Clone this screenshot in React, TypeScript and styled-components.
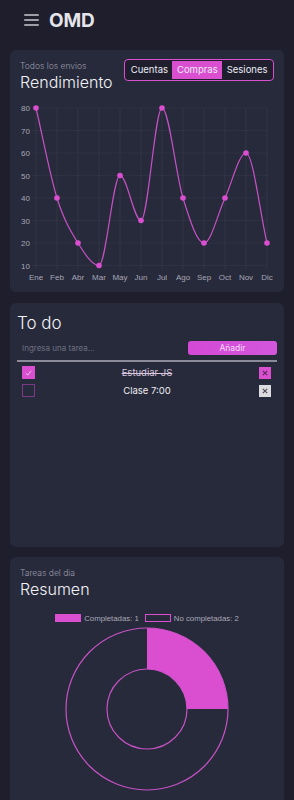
import React from 'react';
import styled, { createGlobalStyle } from 'styled-components';

const PINK = '#d94fd0';
const LINE = '#c651c4';
const PAGE_BG = '#1e1e2d';
const CARD_BG = '#272a3b';
const UI_FONT = `"Inter", "Noto Sans", sans-serif`;
const CHART_FONT = `"Liberation Sans", Arial, sans-serif`;

const GlobalStyle = createGlobalStyle`
  html, body {
    margin: 0;
    padding: 0;
    background: ${PAGE_BG};
    font-family: ${UI_FONT};
    color: #ececf2;
  }
  * { box-sizing: border-box; }
`;

const Page = styled.div`
  padding: 0 10px 20px;
`;

const Header = styled.header`
  display: flex;
  align-items: center;
  gap: 10px;
  height: 40px;
  padding-left: 14px;
  margin-bottom: 10px;
`;

const Brand = styled.div`
  font-size: 19px;
  font-weight: 700;
  color: #e4e4ea;
  letter-spacing: -0.2px;
`;

const Card = styled.section<{ $gap?: number }>`
  background: ${CARD_BG};
  border-radius: 6px;
  padding: 10px;
  margin-top: ${(p) => p.$gap ?? 0}px;
`;

const TodoCard = styled(Card)`
  padding: 8px 7px;
  height: 244px;
`;

const CardHead = styled.div`
  display: flex;
  justify-content: space-between;
  align-items: flex-start;
`;

const Eyebrow = styled.div`
  font-size: 8.5px;
  line-height: 12px;
  font-weight: 300;
  color: #9c9cab;
`;

const Title = styled.h2`
  margin: 0;
  font-size: 16px;
  line-height: 20px;
  font-weight: 300;
  color: #f2f2f6;
`;

const Segmented = styled.div`
  display: flex;
  margin-top: -1px;
  padding: 1px;
  border: 1.5px solid ${PINK};
  border-radius: 4px;
  background: ${PAGE_BG};
`;

const SegButton = styled.button<{ $active?: boolean }>`
  height: 18px;
  padding: 0 4.5px;
  border: none;
  background: ${(p) => (p.$active ? PINK : PAGE_BG)};
  color: #ececf4;
  font-family: ${UI_FONT};
  font-size: 9.5px;
  line-height: 18px;
  cursor: pointer;
`;

const ChartSvg = styled.svg`
  display: block;
  margin-top: 6px;
  overflow: visible;
`;

const TodoTitle = styled.h2`
  margin: 0;
  font-size: 17px;
  line-height: 24px;
  font-weight: 300;
  color: #f2f2f6;
`;

const InputRow = styled.div`
  display: flex;
  align-items: center;
  justify-content: space-between;
  margin-top: 6px;
  height: 14px;
`;

const TaskInput = styled.input`
  width: 150px;
  padding: 0 0 0 5px;
  border: none;
  outline: none;
  background: transparent;
  font-family: ${UI_FONT};
  font-size: 8px;
  color: #e0e0e8;
  &::placeholder { color: #6e7082; }
`;

const AddButton = styled.button`
  width: 89px;
  height: 14px;
  border: none;
  border-radius: 3px;
  background: linear-gradient(90deg, #d449d6, #d257dc);
  color: #f3dcf6;
  font-family: ${UI_FONT};
  font-size: 8.5px;
  line-height: 14px;
  padding: 0;
`;

const Divider = styled.div`
  height: 2px;
  margin-top: 5px;
  background: #8b8b99;
`;

const TaskList = styled.ul`
  list-style: none;
  margin: 4px 0 0;
  padding: 0 6px 0 5px;
  display: flex;
  flex-direction: column;
  gap: 5px;
`;

const TaskRow = styled.li`
  display: grid;
  grid-template-columns: 13px 1fr 12px;
  align-items: center;
  height: 13px;
`;

const CheckBox = styled.span<{ $done?: boolean }>`
  width: 13px;
  height: 13px;
  display: flex;
  align-items: center;
  justify-content: center;
  background: ${(p) => (p.$done ? PINK : 'transparent')};
  border: ${(p) => (p.$done ? 'none' : '1.5px solid #7a3a86')};
`;

const TaskText = styled.span<{ $done?: boolean }>`
  text-align: center;
  font-size: 9.5px;
  line-height: 13px;
  color: ${(p) => (p.$done ? '#d9c6de' : '#ececf0')};
  text-decoration: ${(p) => (p.$done ? 'line-through' : 'none')};
`;

const DeleteBtn = styled.span<{ $done?: boolean }>`
  width: 12px;
  height: 12px;
  display: flex;
  align-items: center;
  justify-content: center;
  background: ${(p) => (p.$done ? PINK : '#dcdce0')};
`;

const Legend = styled.div`
  display: flex;
  justify-content: center;
  align-items: center;
  gap: 6px;
  margin-top: 15px;
  height: 8px;
`;

const LegendItem = styled.div`
  display: flex;
  align-items: center;
  gap: 3px;
  font-family: ${CHART_FONT};
  font-size: 7.8px;
  color: #a9a9b6;
`;

const LegendBox = styled.span<{ $filled?: boolean }>`
  width: 26px;
  height: 8px;
  background: ${(p) => (p.$filled ? PINK : 'transparent')};
  border: 1.5px solid ${PINK};
`;

const DonutWrap = styled.div`
  display: flex;
  justify-content: center;
  margin-top: 5px;
  padding-bottom: 12px;
`;

const labels = ['Ene', 'Feb', 'Abr', 'Mar', 'May', 'Jun', 'Jul', 'Ago', 'Sep', 'Oct', 'Nov', 'Dic'];
const values = [80, 40, 20, 10, 50, 30, 80, 40, 20, 40, 60, 20];
const ticks = [80, 70, 60, 50, 40, 30, 20, 10];

const px = (i: number) => 16 + i * 21;
const py = (v: number) => 10 + (80 - v) * 2.25;

function monotonePath(pts: { x: number; y: number }[]) {
  const n = pts.length;
  const d: number[] = [];
  const m: number[] = [];
  for (let i = 0; i < n - 1; i++) d[i] = (pts[i + 1].y - pts[i].y) / (pts[i + 1].x - pts[i].x);
  m[0] = d[0];
  m[n - 1] = d[n - 2];
  for (let i = 1; i < n - 1; i++) {
    m[i] = Math.sign(d[i - 1]) !== Math.sign(d[i]) ? 0 : (d[i - 1] + d[i]) / 2;
  }
  for (let i = 0; i < n - 1; i++) {
    if (d[i] === 0) {
      m[i] = 0;
      m[i + 1] = 0;
      continue;
    }
    const a = m[i] / d[i];
    const b = m[i + 1] / d[i];
    const s = a * a + b * b;
    if (s > 9) {
      const t = 3 / Math.sqrt(s);
      m[i] = a * t * d[i];
      m[i + 1] = b * t * d[i];
    }
  }
  let path = `M${pts[0].x},${pts[0].y}`;
  for (let i = 0; i < n - 1; i++) {
    const dx = (pts[i + 1].x - pts[i].x) / 3;
    path += ` C${pts[i].x + dx},${pts[i].y + dx * m[i]} ${pts[i + 1].x - dx},${pts[i + 1].y - dx * m[i + 1]} ${pts[i + 1].x},${pts[i + 1].y}`;
  }
  return path;
}

const LineChart: React.FC = () => {
  const pts = values.map((v, i) => ({ x: px(i), y: py(v) }));
  return (
    <ChartSvg width={254} height={184} viewBox="0 0 254 184">
      {ticks.map((t) => (
        <line key={`h${t}`} x1={12} x2={247} y1={py(t)} y2={py(t)} stroke="rgba(255,255,255,0.035)" strokeWidth={1} />
      ))}
      {labels.map((l, i) => (
        <line key={`v${l}`} x1={px(i)} x2={px(i)} y1={py(80)} y2={py(10) + 4} stroke="rgba(255,255,255,0.05)" strokeWidth={1} />
      ))}
      {ticks.map((t) => (
        <text key={`t${t}`} x={10} y={py(t) + 3} textAnchor="end" fontFamily={CHART_FONT} fontSize={8} fill="#a6a6b4">
          {t}
        </text>
      ))}
      {labels.map((l, i) => (
        <text key={`l${l}`} x={px(i)} y={182} textAnchor="middle" fontFamily={CHART_FONT} fontSize={8} fill="#a6a6b4">
          {l}
        </text>
      ))}
      <path d={monotonePath(pts)} fill="none" stroke={LINE} strokeWidth={1.2} />
      {pts.map((p, i) => (
        <circle key={`p${i}`} cx={p.x} cy={p.y} r={2.8} fill={PINK} />
      ))}
    </ChartSvg>
  );
};

const Donut: React.FC = () => {
  const c = 82;
  const R = 81;
  const r = 40;
  const slice = `M${c},${c - R} A${R},${R} 0 0 1 ${c + R},${c} L${c + r},${c} A${r},${r} 0 0 0 ${c},${c - r} Z`;
  return (
    <svg width={164} height={164} viewBox="0 0 164 164">
      <circle cx={c} cy={c} r={R} fill="none" stroke={LINE} strokeWidth={1.2} />
      <circle cx={c} cy={c} r={r} fill="none" stroke={LINE} strokeWidth={1.2} />
      <path d={slice} fill={PINK} />
    </svg>
  );
};

const tasks = [
  { text: 'Estudiar JS', done: true },
  { text: 'Clase 7:00', done: false },
];

export default function App() {
  return (
    <>
      <GlobalStyle />
      <Page>
        <Header>
          <svg width={15} height={12} viewBox="0 0 15 12">
            <g stroke="#c9c9d2" strokeWidth={1.3} strokeLinecap="round">
              <line x1={0.7} y1={1} x2={14.3} y2={1} />
              <line x1={0.7} y1={6} x2={14.3} y2={6} />
              <line x1={0.7} y1={11} x2={14.3} y2={11} />
            </g>
          </svg>
          <Brand>OMD</Brand>
        </Header>

        <Card>
          <CardHead>
            <div>
              <Eyebrow>Todos los envios</Eyebrow>
              <Title>Rendimiento</Title>
            </div>
            <Segmented>
              <SegButton>Cuentas</SegButton>
              <SegButton $active>Compras</SegButton>
              <SegButton>Sesiones</SegButton>
            </Segmented>
          </CardHead>
          <LineChart />
        </Card>

        <TodoCard $gap={11}>
          <TodoTitle>To do</TodoTitle>
          <InputRow>
            <TaskInput placeholder="Ingresa una tarea..." />
            <AddButton>Añadir</AddButton>
          </InputRow>
          <Divider />
          <TaskList>
            {tasks.map((t) => (
              <TaskRow key={t.text}>
                <CheckBox $done={t.done}>
                  {t.done && (
                    <svg width={7} height={6} viewBox="0 0 7 6">
                      <path d="M0.8 3.2 L2.7 5 L6.2 0.9" fill="none" stroke="#f1c9f0" strokeWidth={1} />
                    </svg>
                  )}
                </CheckBox>
                <TaskText $done={t.done}>{t.text}</TaskText>
                <DeleteBtn $done={t.done}>
                  <svg width={6} height={6} viewBox="0 0 6 6">
                    <path d="M0.8 0.8 L5.2 5.2 M5.2 0.8 L0.8 5.2" stroke={t.done ? '#5a2a5e' : '#4a4a52'} strokeWidth={1.1} />
                  </svg>
                </DeleteBtn>
              </TaskRow>
            ))}
          </TaskList>
        </TodoCard>

        <Card $gap={10}>
          <Eyebrow>Tareas del dia</Eyebrow>
          <Title>Resumen</Title>
          <Legend>
            <LegendItem>
              <LegendBox $filled />
              Completadas: 1
            </LegendItem>
            <LegendItem>
              <LegendBox />
              No completadas: 2
            </LegendItem>
          </Legend>
          <DonutWrap>
            <Donut />
          </DonutWrap>
        </Card>
      </Page>
    </>
  );
}
